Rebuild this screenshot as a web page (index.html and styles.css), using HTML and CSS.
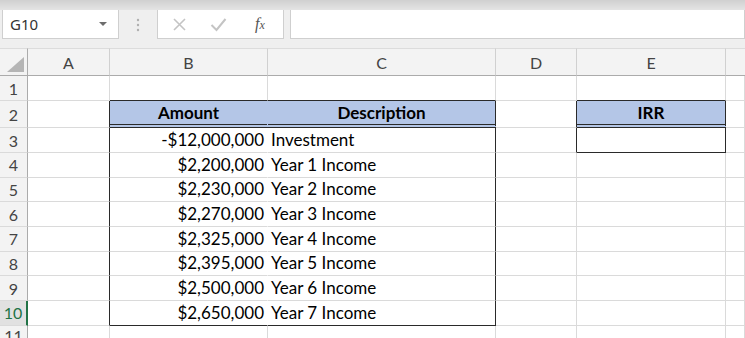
FILE: index.html
```html
<!DOCTYPE html>
<html>
    <head>
        <meta charset="UTF-8" />
        <title>IRR sheet</title>
        <link rel="stylesheet" href="styles.css">
    </head>
    <body>
        <div class="strip"></div>
        <div class="toolbar">
            <div class="namebox">
                <span>G10</span>
                <span class="caret"></span>
            </div>
            <div class="grip">
                <svg width="4" height="14" viewBox="0 0 4 14"><circle cx="2" cy="2" r="1.2" fill="#b0b0b0"/><circle cx="2" cy="7" r="1.2" fill="#b0b0b0"/><circle cx="2" cy="12" r="1.2" fill="#b0b0b0"/></svg>
            </div>
            <div class="fbuttons">
                <svg class="ico" width="15" height="15" viewBox="0 0 15 15"><path d="M2 2 L13 13 M13 2 L2 13" stroke="#c4c4c4" stroke-width="1.6" fill="none"/></svg>
                <svg class="ico" width="17" height="15" viewBox="0 0 17 15"><path d="M1.5 8 L6.5 13 L15.5 2" stroke="#c4c4c4" stroke-width="2" fill="none"/></svg>
                <span class="fx">f<span class="fx-x">x</span></span>
            </div>
            <div class="formula"></div>
        </div>

        <div class="sheet">
            <div class="c corner"><svg width="17" height="15" viewBox="0 0 17 15"><polygon points="17,0 17,15 0,15" fill="#b5b5b5"/></svg></div>
            <div class="c hd">A</div>
            <div class="c hd">B</div>
            <div class="c hd">C</div>
            <div class="c hd">D</div>
            <div class="c hd">E</div>
            <div class="c hd last"></div>

            <div class="c rh">1</div>
            <div class="c"></div>
            <div class="c tb-top"></div>
            <div class="c tb-top"></div>
            <div class="c"></div>
            <div class="c tb-top"></div>
            <div class="c"></div>

            <div class="c rh">2</div>
            <div class="c tb-left"></div>
            <div class="c th nogrid">Amount</div>
            <div class="c th tb-right">Description</div>
            <div class="c tb-left"></div>
            <div class="c th tb-right">IRR</div>
            <div class="c"></div>

            <div class="c rh">3</div>
            <div class="c tb-left"></div>
            <div class="c num nogrid">-$12,000,000</div>
            <div class="c txt tb-right">Investment</div>
            <div class="c tb-left"></div>
            <div class="c tb-right tb-bottom"></div>
            <div class="c"></div>

            <div class="c rh">4</div>
            <div class="c tb-left"></div>
            <div class="c num nogrid">$2,200,000</div>
            <div class="c txt tb-right">Year 1 Income</div>
            <div class="c"></div>
            <div class="c"></div>
            <div class="c"></div>

            <div class="c rh">5</div>
            <div class="c tb-left"></div>
            <div class="c num nogrid">$2,230,000</div>
            <div class="c txt tb-right">Year 2 Income</div>
            <div class="c"></div>
            <div class="c"></div>
            <div class="c"></div>

            <div class="c rh">6</div>
            <div class="c tb-left"></div>
            <div class="c num nogrid">$2,270,000</div>
            <div class="c txt tb-right">Year 3 Income</div>
            <div class="c"></div>
            <div class="c"></div>
            <div class="c"></div>

            <div class="c rh">7</div>
            <div class="c tb-left"></div>
            <div class="c num nogrid">$2,325,000</div>
            <div class="c txt tb-right">Year 4 Income</div>
            <div class="c"></div>
            <div class="c"></div>
            <div class="c"></div>

            <div class="c rh">8</div>
            <div class="c tb-left"></div>
            <div class="c num nogrid">$2,395,000</div>
            <div class="c txt tb-right">Year 5 Income</div>
            <div class="c"></div>
            <div class="c"></div>
            <div class="c"></div>

            <div class="c rh">9</div>
            <div class="c tb-left"></div>
            <div class="c num nogrid">$2,500,000</div>
            <div class="c txt tb-right">Year 6 Income</div>
            <div class="c"></div>
            <div class="c"></div>
            <div class="c"></div>

            <div class="c rh sel">10</div>
            <div class="c tb-left"></div>
            <div class="c num nogrid tb-bottom">$2,650,000</div>
            <div class="c txt tb-right tb-bottom">Year 7 Income</div>
            <div class="c"></div>
            <div class="c"></div>
            <div class="c"></div>

            <div class="c rh">11</div>
            <div class="c"></div>
            <div class="c"></div>
            <div class="c"></div>
            <div class="c"></div>
            <div class="c"></div>
            <div class="c"></div>
        </div>
    </body>
</html>
```

FILE: styles.css
```css
* {
    box-sizing: border-box;
}

body {
    margin: 0;
    width: 745px;
    height: 338px;
    overflow: hidden;
    background-color: #ffffff;
    font-family: Lato, "Liberation Sans", sans-serif;
}

.strip {
    height: 10px;
    background: linear-gradient(#d0d0d0, #e4e4e4);
}

.toolbar {
    height: 38px;
    display: flex;
    align-items: flex-start;
    background-color: #efefef;
    padding-left: 2px;
}

.namebox, .fbuttons, .formula {
    height: 29px;
    background-color: #ffffff;
    border: 1px solid #cfcfcf;
    border-top: none;
}

.namebox {
    width: 117px;
    display: flex;
    align-items: center;
    justify-content: space-between;
    padding: 0 11px 0 7px;
    font-family: "Noto Sans", sans-serif;
    font-size: 15px;
    color: #333333;
}

.caret {
    width: 0;
    height: 0;
    border-left: 4px solid transparent;
    border-right: 4px solid transparent;
    border-top: 4px solid #6d6d6d;
}

.grip {
    width: 38px;
    height: 29px;
    display: flex;
    align-items: center;
    justify-content: center;
}

.fbuttons {
    width: 127px;
    display: flex;
    align-items: center;
    padding-left: 14px;
    gap: 23px;
}

.fx {
    font-family: "Liberation Serif", serif;
    font-style: italic;
    font-size: 16px;
    color: #555555;
    margin-left: 5px;
}

.fx-x {
    font-size: 12px;
}

.formula {
    flex: 1;
    margin-left: 6px;
}

.sheet {
    display: grid;
    grid-template-columns: 28px 82px 158px 228px 81px 149px 1fr;
    grid-template-rows: 28px 25px 27px 25px repeat(7, 24.7px) 1fr;
    height: 290px;
    font-size: 17px;
    color: #000000;
}

.c {
    border-right: 1px solid #dadada;
    border-bottom: 1px solid #dadada;
    display: flex;
    align-items: flex-end;
    padding: 0 3px 2px 3px;
    white-space: nowrap;
}

.hd {
    background-color: #f3f3f3;
    border-right-color: #d0d0d0;
    border-bottom-color: #ababab;
    border-top: 1px solid #dcdcdc;
    justify-content: center;
    align-items: center;
    padding: 0;
    color: #444444;
    font-size: 16px;
}

.hd.last {
    border-right: none;
}

.corner {
    background-color: #f3f3f3;
    border-right-color: #ababab;
    border-bottom-color: #ababab;
    border-top: 1px solid #dcdcdc;
    justify-content: flex-end;
    padding: 0 3px 3px 0;
}

.rh {
    background-color: #f3f3f3;
    border-right-color: #ababab;
    border-bottom-color: #dadada;
    justify-content: center;
    align-items: center;
    padding: 0;
    color: #444444;
    font-size: 16px;
}

.rh.sel {
    background-color: #e1e1e1;
    color: #217346;
    border-right: 2px solid #217346;
}

.num {
    justify-content: flex-end;
}

.txt {
    justify-content: flex-start;
}

.nogrid {
    border-right-color: transparent;
}

.th {
    background-color: #b4c6e7;
    font-weight: bold;
    justify-content: center;
    border-bottom: 4px double #2a2a2a;
    padding-bottom: 1px;
}

.tb-top {
    border-bottom-color: #2a2a2a;
}

.tb-left, .tb-right {
    border-right-color: #2a2a2a;
}

.tb-bottom {
    border-bottom-color: #2a2a2a;
}
```
